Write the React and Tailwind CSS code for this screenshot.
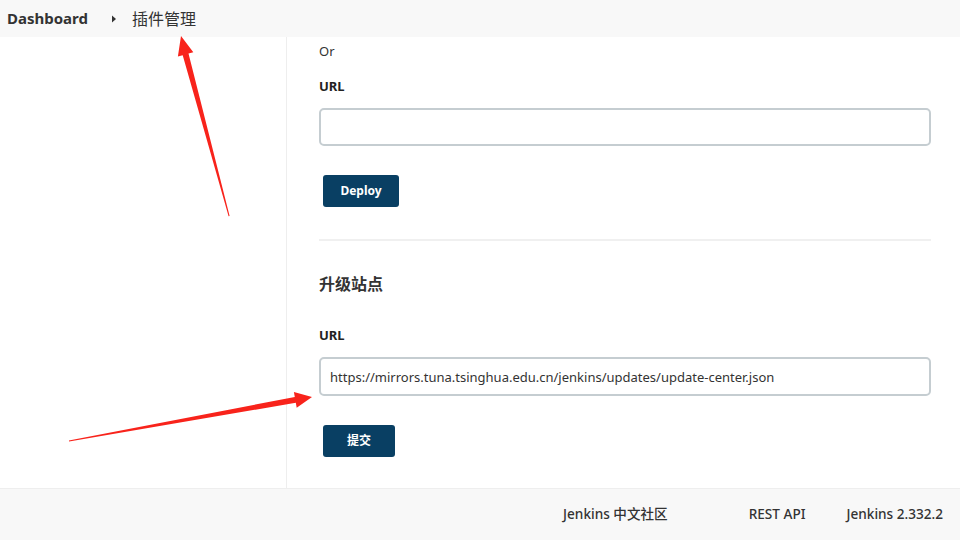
import React from "react";

const font = { fontFamily: '"Noto Sans", "Open Sans", "Noto Sans CJK SC", sans-serif' };

function Arrows() {
  return (
    <svg className="pointer-events-none absolute left-0 top-0" width="960" height="540" viewBox="0 0 960 540">
      <polygon
        fill="#f8231b"
        points="181,36 193.3,52.3 188.5,53.6 229.6,216 228.6,216.2 182.7,55.2 177.9,56.5"
      />
      <polygon
        fill="#f8231b"
        points="312,397 296.7,407.8 295.8,402.8 69.1,441.5 68.9,440.5 294.8,397 293.9,392"
      />
    </svg>
  );
}

export default function App() {
  return (
    <div className="relative h-[540px] w-[960px] overflow-hidden bg-white text-[#333]" style={font}>
      <header className="flex h-[37px] items-center bg-[#f8f8f8] pl-[7px]">
        <span className="text-[15px] font-bold text-[#333]">Dashboard</span>
        <svg className="ml-[23px]" width="6" height="8" viewBox="0 0 6 8">
          <polygon points="1,0.5 5,4 1,7.5" fill="#333" />
        </svg>
        <span className="ml-[15px] text-[16px] text-[#333]">插件管理</span>
      </header>

      <div className="flex h-[451px]">
        <aside className="w-[287px] shrink-0 border-r border-[#eeeeee]" />
        <main className="flex-1 pl-[32px] pr-[29px]">
          <p className="mt-[5px] text-[13px] leading-[18px] text-[#333]">Or</p>
          <label className="mt-[17px] block text-[13px] font-bold leading-[18px] text-[#222]">URL</label>
          <input
            className="mt-[13px] block h-[38px] w-full rounded-[5px] border-2 border-[#c5cdd1] bg-white px-[9px] text-[13px] outline-none"
            defaultValue=""
          />
          <button className="ml-[4px] mt-[29px] h-[32px] w-[76px] rounded-[3px] bg-[#093f63] text-[12px] font-bold text-white">
            Deploy
          </button>
          <div className="mt-[32px] h-[2px] w-full bg-[#f0f0f0]" />
          <h2 className="mt-[32px] text-[16px] font-semibold leading-[22px] text-[#333]">升级站点</h2>
          <label className="mt-[31px] block text-[13px] font-bold leading-[18px] text-[#222]">URL</label>
          <input
            className="mt-[13px] block h-[39px] w-full rounded-[5px] border-2 border-[#c5cdd1] bg-white px-[9px] text-[13px] text-[#333] outline-none"
            style={font}
            defaultValue="https://mirrors.tuna.tsinghua.edu.cn/jenkins/updates/update-center.json"
          />
          <button className="ml-[4px] mt-[29px] h-[32px] w-[72px] rounded-[3px] bg-[#093f63] text-[12px] font-bold text-white">
            提交
          </button>
        </main>
      </div>

      <footer className="flex h-[52px] items-center justify-end border-t border-[#eeeeee] bg-[#f8f8f8] pr-[17px] text-[13.6px] font-medium text-[#333]">
        <span>Jenkins 中文社区</span>
        <span className="ml-[81px]">REST API</span>
        <span className="ml-[41px]">Jenkins 2.332.2</span>
      </footer>

      <Arrows />
    </div>
  );
}
